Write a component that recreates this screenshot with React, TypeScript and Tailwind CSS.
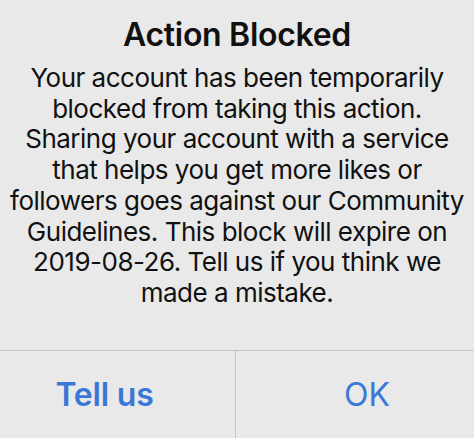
const bodyLines = [
  "Your account has been temporarily",
  "blocked from taking this action.",
  "Sharing your account with a service",
  "that helps you get more likes or",
  "followers goes against our Community",
  "Guidelines. This block will expire on",
  "2019-08-26. Tell us if you think we",
  "made a mistake.",
];

export default function App() {
  return (
    <div
      className="flex h-[438px] w-[474px] flex-col overflow-hidden bg-[#e9e9e9] text-center text-[#111111]"
      style={{ fontFamily: "Inter, 'Noto Sans', sans-serif" }}
    >
      <div className="flex h-[350px] flex-col pt-[15px]">
        <h1 className="text-[32px] font-semibold leading-[40px] tracking-[-0.3px]">Action Blocked</h1>
        <p className="mt-[8px] text-[26px] leading-[30.7px] tracking-[-0.5px]">
          {bodyLines.map((line) => (
            <span key={line} className="block whitespace-nowrap">
              {line}
            </span>
          ))}
        </p>
      </div>
      {/* the alert is wider than the crop, so the row overhangs both edges */}
      <div className="-ml-[26px] flex w-[524px] flex-1 border-t border-[#c4c4c4]">
        <button
          type="button"
          className="flex w-[262px] items-center justify-center border-r border-[#c4c4c4] text-[32px] font-semibold leading-[40px] tracking-[-0.2px] text-[#3a78d8]"
        >
          Tell us
        </button>
        <button
          type="button"
          className="flex w-[262px] items-center justify-center text-[32px] leading-[40px] text-[#3a78d8]"
        >
          OK
        </button>
      </div>
    </div>
  );
}
